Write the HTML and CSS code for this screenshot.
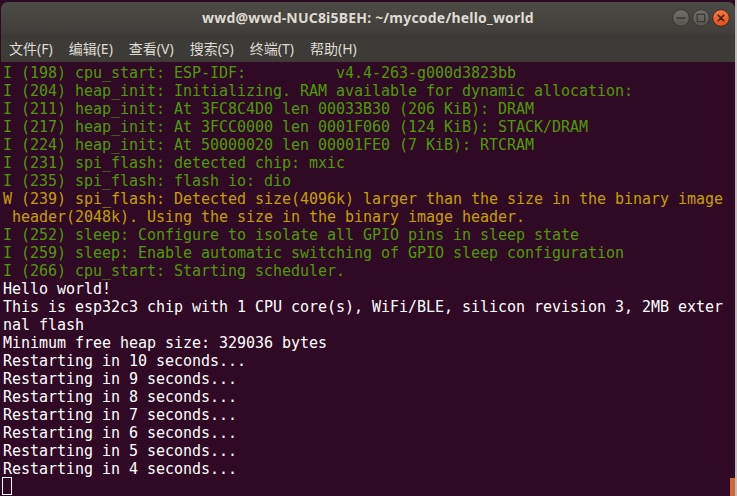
FILE: index.html
```html
<!DOCTYPE html>
<html>
<head>
<meta charset="utf-8">
<link rel="stylesheet" href="styles.css">
</head>
<body>
<div class="screen">
  <div class="window">
    <div class="titlebar">
      <div class="title">wwd@wwd-NUC8i5BEH: ~/mycode/hello_world</div>
      <div class="buttons">
        <svg class="btn" width="18" height="18" viewBox="0 0 18 18">
          <defs>
            <linearGradient id="g1" x1="0" y1="0" x2="0" y2="1">
              <stop offset="0" stop-color="#72716c"/>
              <stop offset="1" stop-color="#55544f"/>
            </linearGradient>
            <linearGradient id="g2" x1="0" y1="0" x2="0" y2="1">
              <stop offset="0" stop-color="#f57a4a"/>
              <stop offset="1" stop-color="#e0501e"/>
            </linearGradient>
          </defs>
          <circle cx="9" cy="9" r="8.3" fill="url(#g1)" stroke="#34332f" stroke-width="0.9"/>
          <rect x="4.5" y="8.3" width="9" height="1.6" fill="#3a3935"/>
        </svg>
        <svg class="btn" width="18" height="18" viewBox="0 0 18 18">
          <circle cx="9" cy="9" r="8.3" fill="url(#g1)" stroke="#34332f" stroke-width="0.9"/>
          <rect x="5.3" y="5.3" width="7.4" height="7.4" fill="none" stroke="#3a3935" stroke-width="1.3"/>
        </svg>
        <svg class="btn" width="18" height="18" viewBox="0 0 18 18">
          <circle cx="9" cy="9" r="8.3" fill="url(#g2)" stroke="#4a2414" stroke-width="0.9"/>
          <path d="M6.2 6.2 L11.8 11.8 M11.8 6.2 L6.2 11.8" stroke="#4a1f0e" stroke-width="1.6" stroke-linecap="round"/>
        </svg>
      </div>
    </div>
    <div class="menubar">
      <span class="menu">文件(F)</span>
      <span class="menu">编辑(E)</span>
      <span class="menu">查看(V)</span>
      <span class="menu">搜索(S)</span>
      <span class="menu">终端(T)</span>
      <span class="menu">帮助(H)</span>
    </div>
    <div class="terminal">
<div class="ln g">I (198) cpu_start: ESP-IDF:          v4.4-263-g000d3823bb</div>
<div class="ln g">I (204) heap_init: Initializing. RAM available for dynamic allocation:</div>
<div class="ln g">I (211) heap_init: At 3FC8C4D0 len 00033B30 (206 KiB): DRAM</div>
<div class="ln g">I (217) heap_init: At 3FCC0000 len 0001F060 (124 KiB): STACK/DRAM</div>
<div class="ln g">I (224) heap_init: At 50000020 len 00001FE0 (7 KiB): RTCRAM</div>
<div class="ln g">I (231) spi_flash: detected chip: mxic</div>
<div class="ln g">I (235) spi_flash: flash io: dio</div>
<div class="ln y">W (239) spi_flash: Detected size(4096k) larger than the size in the binary image</div>
<div class="ln y"> header(2048k). Using the size in the binary image header.</div>
<div class="ln g">I (252) sleep: Configure to isolate all GPIO pins in sleep state</div>
<div class="ln g">I (259) sleep: Enable automatic switching of GPIO sleep configuration</div>
<div class="ln g">I (266) cpu_start: Starting scheduler.</div>
<div class="ln">Hello world!</div>
<div class="ln">This is esp32c3 chip with 1 CPU core(s), WiFi/BLE, silicon revision 3, 2MB exter</div>
<div class="ln">nal flash</div>
<div class="ln">Minimum free heap size: 329036 bytes</div>
<div class="ln">Restarting in 10 seconds...</div>
<div class="ln">Restarting in 9 seconds...</div>
<div class="ln">Restarting in 8 seconds...</div>
<div class="ln">Restarting in 7 seconds...</div>
<div class="ln">Restarting in 6 seconds...</div>
<div class="ln">Restarting in 5 seconds...</div>
<div class="ln">Restarting in 4 seconds...</div>
<div class="ln"><span class="cursor"></span></div>
      <div class="thumb"></div>
    </div>
  </div>
  <div class="edge"></div>
</div>
</body>
</html>
```
FILE: styles.css
```css
html, body {
  margin: 0;
  padding: 0;
  background: #2c0a22;
}
.screen {
  width: 737px;
  height: 496px;
  display: flex;
  overflow: hidden;
}
.window {
  flex: 1;
  margin: 2px 0 0 1px;
  display: flex;
  flex-direction: column;
  border-radius: 7px 7px 0 0;
  overflow: hidden;
  background: #3c3b37;
}
.edge {
  width: 2px;
  background: #bdbdbb;
}
.titlebar {
  height: 32px;
  display: flex;
  align-items: center;
  position: relative;
  background: linear-gradient(#4c4b46, #3f3e3a);
}
.title {
  flex: 1;
  text-align: center;
  color: #dfdbd2;
  font-family: "Noto Sans", "DejaVu Sans", sans-serif;
  font-weight: bold;
  font-size: 14px;
  letter-spacing: 0.2px;
  margin-top: -1px;
}
.buttons {
  position: absolute;
  right: 5px;
  top: 7px;
  display: flex;
  gap: 2px;
}
.btn {
  display: block;
}
.menubar {
  height: 28px;
  display: flex;
  align-items: center;
  gap: 16px;
  padding-left: 8px;
  background: #3c3b37;
  color: #dfdbd2;
  font-family: "Noto Sans", "Noto Sans CJK SC", sans-serif;
  font-size: 14px;
}
.menu {
  white-space: nowrap;
}
.terminal {
  flex: 1;
  position: relative;
  background: #300a24;
  padding: 1px 0 0 2px;
  font-family: "DejaVu Sans Mono", monospace;
  font-size: 15px;
  letter-spacing: -0.03px;
  color: #ffffff;
}
.ln {
  height: 18px;
  line-height: 20px;
  white-space: pre;
}
.g { color: #4e9a06; }
.y { color: #c4a000; }
.cursor {
  display: inline-block;
  width: 10px;
  height: 18px;
  margin-left: -1px;
  box-sizing: border-box;
  border: 1px solid #ffffff;
  vertical-align: top;
}
.thumb {
  position: absolute;
  right: 0;
  bottom: 0;
  width: 5px;
  height: 18px;
  background: #d2683a;
}
```
